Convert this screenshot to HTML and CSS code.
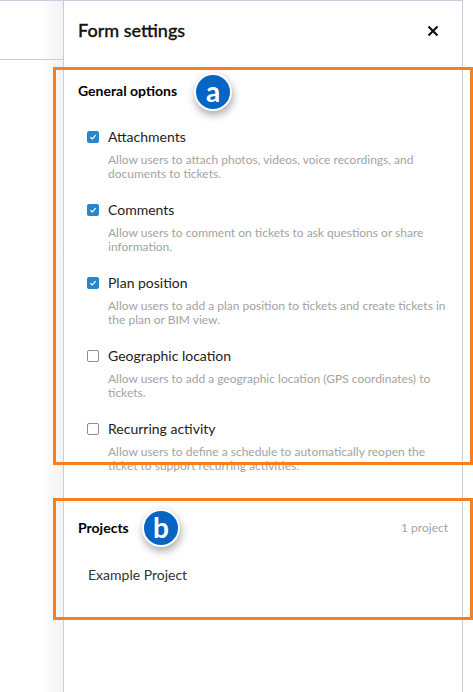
FILE: index.html
```html
<!DOCTYPE html>
<html lang="en">
<head>
<meta charset="UTF-8">
<title>Form settings</title>
<link rel="stylesheet" href="styles.css">
</head>
<body>
<div class="page">
  <div class="backdrop">
    <div class="backdrop-header"></div>
  </div>
  <aside class="panel">
    <header class="panel-header">
      <h1>Form settings</h1>
      <button class="close" aria-label="Close">
        <svg width="12" height="12" viewBox="0 0 12 12"><path d="M1.5 1.5l9 9M10.5 1.5l-9 9" stroke="#111" stroke-width="2.2" fill="none"/></svg>
      </button>
    </header>
    <section class="general">
      <h2>General options</h2>
      <div class="option">
        <span class="check on"><svg width="12" height="12" viewBox="0 0 12 12"><path d="M3.4 6.2l1.9 1.8 3.4-3.8" stroke="#fff" stroke-width="1.2" fill="none"/></svg></span>
        <div>
          <div class="option-name">Attachments</div>
          <p>Allow users to attach photos, videos, voice recordings, and documents to tickets.</p>
        </div>
      </div>
      <div class="option">
        <span class="check on"><svg width="12" height="12" viewBox="0 0 12 12"><path d="M3.4 6.2l1.9 1.8 3.4-3.8" stroke="#fff" stroke-width="1.2" fill="none"/></svg></span>
        <div>
          <div class="option-name">Comments</div>
          <p>Allow users to comment on tickets to ask questions or share information.</p>
        </div>
      </div>
      <div class="option">
        <span class="check on"><svg width="12" height="12" viewBox="0 0 12 12"><path d="M3.4 6.2l1.9 1.8 3.4-3.8" stroke="#fff" stroke-width="1.2" fill="none"/></svg></span>
        <div>
          <div class="option-name">Plan position</div>
          <p>Allow users to add a plan position to tickets and create tickets in the plan or BIM view.</p>
        </div>
      </div>
      <div class="option">
        <span class="check"></span>
        <div>
          <div class="option-name">Geographic location</div>
          <p>Allow users to add a geographic location (GPS coordinates) to tickets.</p>
        </div>
      </div>
      <div class="option">
        <span class="check"></span>
        <div>
          <div class="option-name">Recurring activity</div>
          <p>Allow users to define a schedule to automatically reopen the ticket to support recurring activities.</p>
        </div>
      </div>
    </section>
    <section class="projects">
      <div class="projects-head">
        <h2>Projects</h2>
        <span class="count">1 project</span>
      </div>
      <div class="project">Example Project</div>
    </section>
  </aside>
</div>
<div class="callout callout-a"></div>
<div class="callout callout-b"></div>
<div class="badge badge-a">a</div>
<div class="badge badge-b">b</div>
</body>
</html>
```

FILE: styles.css
```css
html, body {
  margin: 0;
  padding: 0;
  height: 100%;
  background-color: #fff;
  overflow: hidden;
}
body {
  font-family: Lato, "Open Sans", sans-serif;
  color: #222;
  position: relative;
}
.page {
  display: flex;
  height: 692px;
  width: 463px;
}
.backdrop {
  width: 63px;
  flex-shrink: 0;
  background: linear-gradient(to right, #fff 40px, #f3f3f3 63px);
  border-top: 1px solid #c3d0dc;
  box-sizing: border-box;
}
.backdrop-header {
  height: 58px;
  border-bottom: 1px solid #c3d0dc;
}
.panel {
  flex: 1;
  background-color: #fff;
  border: 1px solid #c3d0dc;
  border-bottom: none;
}
.panel-header {
  display: flex;
  align-items: center;
  justify-content: space-between;
  height: 59px;
  padding: 0 23px 0 14px;
}
h1 {
  margin: 0 0 2px;
  font-size: 18px;
  font-weight: 500;
  color: #111;
  -webkit-text-stroke: 0.3px #111;
}
h2 {
  margin: 0;
  font-size: 14px;
  font-weight: 700;
  color: #000;
}
.close {
  display: flex;
  padding: 0;
  background: none;
  border: none;
}
.general {
  height: 437px;
  padding: 22px 14px 0;
  box-sizing: border-box;
  overflow: hidden;
}
.option {
  display: flex;
  gap: 9px;
  height: 73px;
  padding-left: 9px;
}
.general h2 {
  margin-bottom: 29px;
}
.option-name {
  font-size: 14px;
  line-height: 17px;
  color: #222;
}
.option p {
  margin: 8px 0 0;
  font-size: 12px;
  line-height: 14px;
  color: #a3a3a3;
}
.check {
  flex-shrink: 0;
  display: flex;
  width: 12px;
  height: 12px;
  margin-top: 3px;
  border: 1px solid #8e8e8e;
  border-radius: 2px;
  box-sizing: border-box;
}
.check.on {
  background-color: #2a86cb;
  border: none;
}
.projects {
  padding: 22px 14px 0;
}
.projects-head {
  display: flex;
  align-items: center;
  justify-content: space-between;
}
.count {
  font-size: 12px;
  color: #a3a3a3;
}
.project {
  margin: 30px 0 0 10px;
  font-size: 14px;
  color: #333;
}

/* annotations drawn over the screenshot */
.callout {
  position: absolute;
  left: 53px;
  width: 420px;
  border: 3px solid #f77f1f;
  box-sizing: border-box;
}
.callout-a {
  top: 67px;
  height: 398px;
}
.callout-b {
  top: 498px;
  height: 122px;
}
.badge {
  position: absolute;
  width: 38px;
  height: 38px;
  box-sizing: border-box;
  border: 2px solid #fff;
  border-radius: 50%;
  background-color: #0565c5;
  box-shadow: 1px 4px 8px rgba(0, 0, 0, 0.35);
  color: #fff;
  font-size: 28px;
  font-weight: 700;
  line-height: 32px;
  text-align: center;
}
.badge-a {
  left: 194px;
  top: 73px;
}
.badge-b {
  left: 142px;
  top: 509px;
}
```
